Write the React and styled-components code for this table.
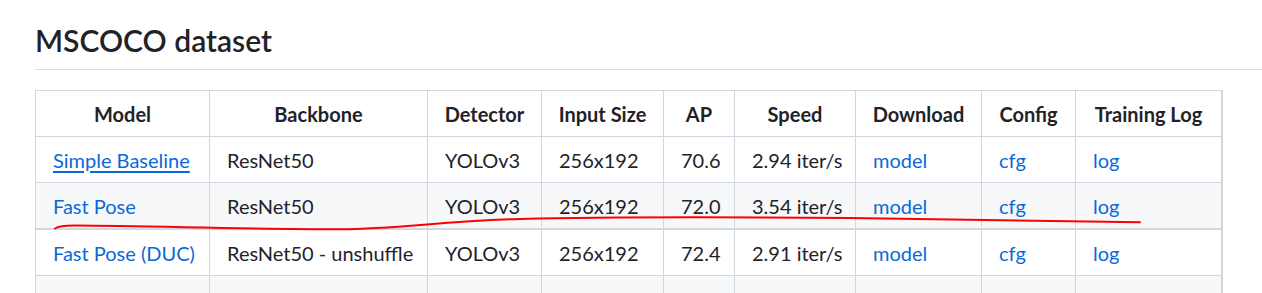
import styled, { createGlobalStyle } from 'styled-components'

const rows = [
  { name: 'Simple Baseline', backbone: 'ResNet50', ap: '70.6', speed: '2.94 iter/s', hover: true },
  { name: 'Fast Pose', backbone: 'ResNet50', ap: '72.0', speed: '3.54 iter/s', thick: true },
  { name: 'Fast Pose (DUC)', backbone: 'ResNet50 - unshuffle', ap: '72.4', speed: '2.91 iter/s' },
  { name: 'HRNet', backbone: 'HRNet - W32', ap: '72.5', speed: '2.49 iter/s' },
]

const headers = ['Model', 'Backbone', 'Detector', 'Input Size', 'AP', 'Speed', 'Download', 'Config', 'Training Log']
const widths = [174, 218, 114, 122, 71, 121, 126, 94, 146]

/*---> Component <---*/
export default function App() {
  return (
    <Page>
      <GlobalStyle />
      <Heading>MSCOCO dataset</Heading>
      <Table>
        <colgroup>
          {widths.map((w, i) => (
            <col key={i} style={{ width: w }} />
          ))}
        </colgroup>
        <thead>
          <tr>
            {headers.map((h) => (
              <HeadCell key={h}>{h}</HeadCell>
            ))}
          </tr>
        </thead>
        <tbody>
          {rows.map((row, i) => (
            <Row key={row.name} $striped={i % 2 === 1} $thick={row.thick}>
              <Cell>
                <Link href='#' $hover={row.hover}>{row.name}</Link>
              </Cell>
              <Cell>{row.backbone}</Cell>
              <Cell>YOLOv3</Cell>
              <Cell>256x192</Cell>
              <Cell>{row.ap}</Cell>
              <Cell>{row.speed}</Cell>
              <Cell>
                <Link href='#'>model</Link>
              </Cell>
              <Cell>
                <Link href='#'>cfg</Link>
              </Cell>
              <Cell>
                <Link href='#'>log</Link>
              </Cell>
            </Row>
          ))}
        </tbody>
      </Table>
      <Scribble viewBox='0 0 1262 293' width='1262' height='293'>
        <path
          d='M55 228.5 Q59 225.8 75 225.6 C150 226 250 229.2 340 229.2 C400 229.2 440 221 520 219 C600 217 700 216.8 850 218 C950 219 1050 221 1140 222.2'
          fill='none'
          stroke='#ff0000'
          strokeWidth='2'
          strokeLinecap='round'
        />
      </Scribble>
    </Page>
  )
}

/*---> Styles <---*/
const GlobalStyle = createGlobalStyle`
  body {
    margin: 0;
    background: #ffffff;
    font-family: Lato, 'Open Sans', 'Liberation Sans', sans-serif;
    color: #1f2328;
  }
`

const Page = styled.div`
  position: relative;
  height: 293px;
  overflow: hidden;
  padding: 22px 0 0 35px;
  box-sizing: border-box;
`

const Heading = styled.h2`
  margin: 0 0 20px;
  padding-bottom: 10px;
  font-size: 30px;
  line-height: 37px;
  font-weight: 600;
  border-bottom: 1px solid #d8dee4;
`

const Table = styled.table`
  table-layout: fixed;
  width: 1188px;
  border-collapse: separate;
  border-spacing: 0;
  border-top: 1px solid #d0d7de;
  border-left: 1px solid #d0d7de;
  border-right: 1px solid #d0d7de;
  font-size: 20px;
  line-height: 30px;
`

const HeadCell = styled.th`
  height: 45px;
  padding: 0 10px;
  font-weight: 700;
  text-align: center;
  white-space: nowrap;
  border-right: 1px solid #d0d7de;
  border-bottom: 1px solid #d0d7de;
`

const Row = styled.tr`
  background: ${(p) => (p.$striped ? '#f6f8fa' : '#ffffff')};

  td {
    border-bottom-width: ${(p) => (p.$thick ? '2px' : '1px')};
  }
`

const Cell = styled.td`
  height: 45px;
  padding: 0 10px 0 17px;
  white-space: nowrap;
  vertical-align: middle;
  border-right: 1px solid #d0d7de;
  border-bottom: 1px solid #d0d7de;
`

const Link = styled.a`
  color: #0969da;
  text-decoration: ${(p) => (p.$hover ? 'underline' : 'none')};
  text-decoration-thickness: 2px;
  text-underline-offset: 3px;
`

const Scribble = styled.svg`
  position: absolute;
  left: 0;
  top: 0;
  pointer-events: none;
`
